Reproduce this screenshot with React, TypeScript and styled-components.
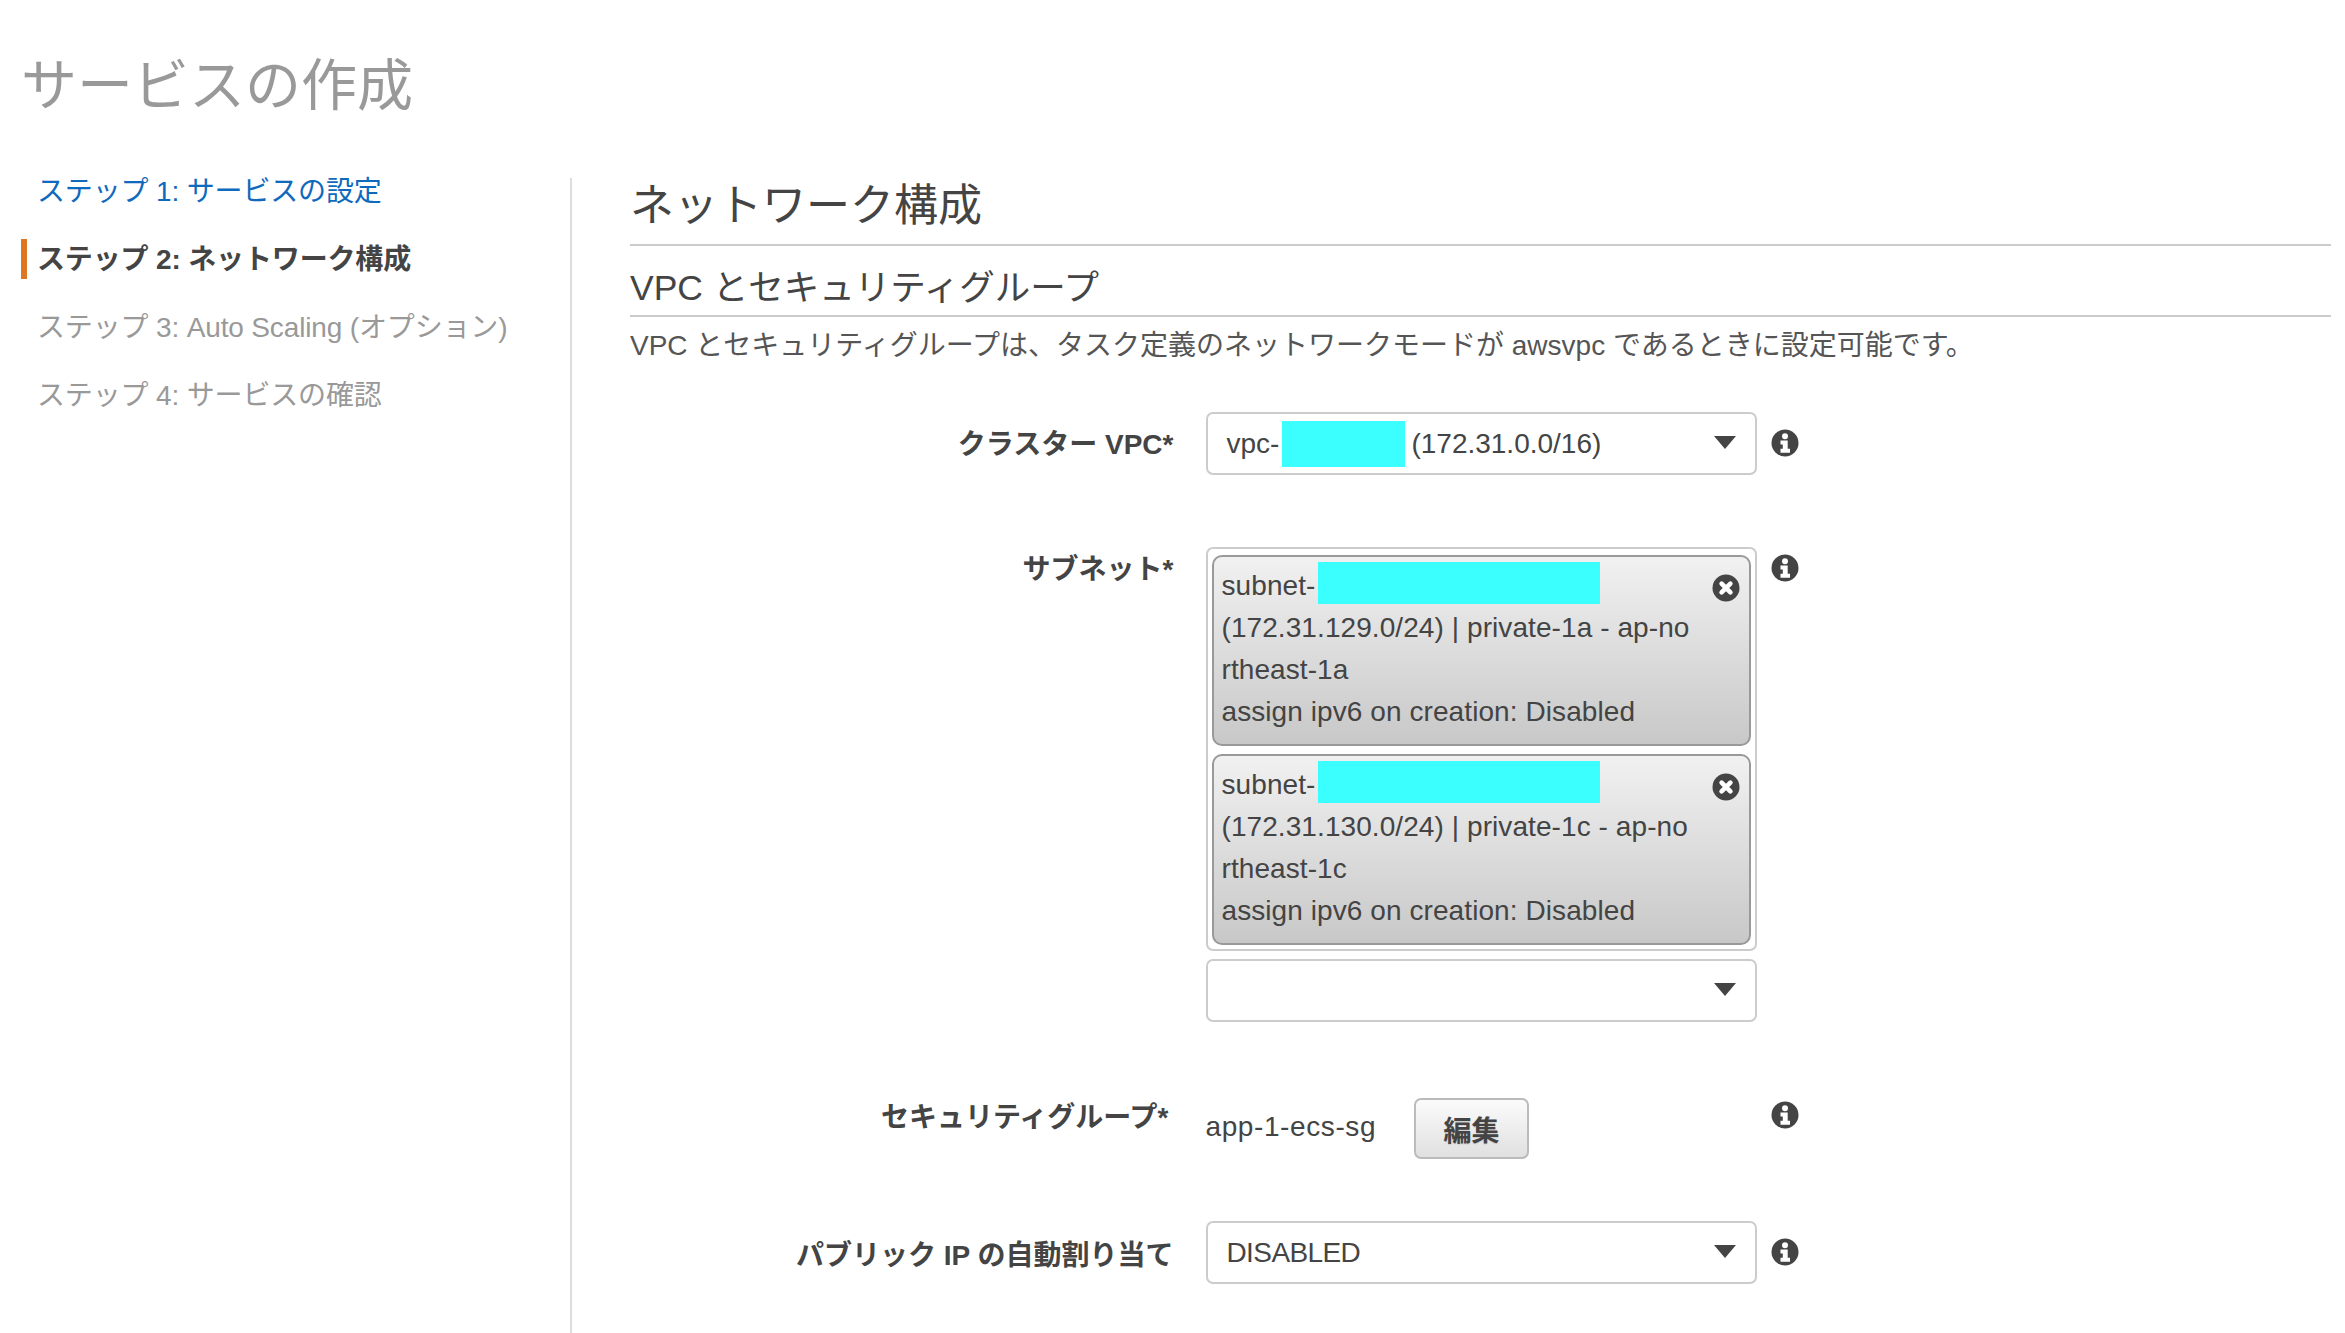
import { createGlobalStyle } from "styled-components";
import styled from "styled-components";

const GlobalStyle = createGlobalStyle`
  html, body {
    margin: 0;
    padding: 0;
    background: #fff;
  }
  body {
    width: 2345px;
    height: 1333px;
    overflow: hidden;
    font-family: "Liberation Sans", "Noto Sans CJK JP", sans-serif;
    font-size: 28px;
    color: #444;
  }
`;

const steps = [
  { text: "ステップ 1: サービスの設定", state: "link" },
  { text: "ステップ 2: ネットワーク構成", state: "active" },
  { text: "ステップ 3: Auto Scaling (オプション)", state: "idle" },
  { text: "ステップ 4: サービスの確認", state: "idle" },
];

const subnets = [
  { cidr: "(172.31.129.0/24) | private-1a - ap-no", rest: "rtheast-1a" },
  { cidr: "(172.31.130.0/24) | private-1c - ap-no", rest: "rtheast-1c" },
];

const InfoIcon = () => (
  <svg width="28" height="28" viewBox="0 0 28 28">
    <circle cx="14" cy="14" r="13.5" fill="#444" />
    <circle cx="14" cy="7.2" r="3" fill="#fff" />
    <path d="M9.5 11.5h7.2v8.2h2.3v4H9.5v-4h2.3v-4.2H9.5z" fill="#fff" />
  </svg>
);

const CloseIcon = () => (
  <svg width="28" height="28" viewBox="0 0 28 28">
    <circle cx="14" cy="14" r="13.5" fill="#444" />
    <path d="M9.6 9.6l8.8 8.8M18.4 9.6l-8.8 8.8" stroke="#fff" strokeWidth="4.6" strokeLinecap="round" />
  </svg>
);

export default function App() {
  return (
    <Page>
      <GlobalStyle />
      <PageTitle>サービスの作成</PageTitle>
      <Layout>
        <StepNav>
          {steps.map((s) => (
            <StepItem key={s.text} $state={s.state}>
              {s.text}
            </StepItem>
          ))}
        </StepNav>
        <Main>
          <SectionTitle>ネットワーク構成</SectionTitle>
          <SubTitle>VPC とセキュリティグループ</SubTitle>
          <Description>
            VPC とセキュリティグループは、タスク定義のネットワークモードが awsvpc であるときに設定可能です。
          </Description>

          <FormRow $offset={11} $mt={46}>
            <FieldLabel>クラスター VPC*</FieldLabel>
            <SelectBox>
              <SelectValue>
                vpc-
                <Gap $width={3} />
                <Redacted $width={123} $height={46} />
                <Gap $width={6} />
                (172.31.0.0/16)
              </SelectValue>
              <Caret />
            </SelectBox>
            <InfoSlot>
              <InfoIcon />
            </InfoSlot>
          </FormRow>

          <FormRow $offset={1} $mt={72}>
            <FieldLabel>サブネット*</FieldLabel>
            <div>
              <TagList>
                {subnets.map((s) => (
                  <Tag key={s.cidr}>
                    <TagClose>
                      <CloseIcon />
                    </TagClose>
                    <TagLine>
                      subnet-
                      <Gap $width={3} />
                      <Redacted $width={282} $height={42} $mt={-3} />
                    </TagLine>
                    <TagLine>{s.cidr}</TagLine>
                    <TagLine>{s.rest}</TagLine>
                    <TagLine>assign ipv6 on creation: Disabled</TagLine>
                  </Tag>
                ))}
              </TagList>
              <SelectBox $mt={8}>
                <SelectValue />
                <Caret />
              </SelectBox>
            </div>
            <InfoSlot>
              <InfoIcon />
            </InfoSlot>
          </FormRow>

          <FormRow $offset={0} $mt={73}>
            <FieldLabel $shift={-5} $top={3}>
              セキュリティグループ*
            </FieldLabel>
            <InlineField>
              <PlainValue>app-1-ecs-sg</PlainValue>
              <EditButton>編集</EditButton>
            </InlineField>
            <InfoSlot>
              <InfoIcon />
            </InfoSlot>
          </FormRow>

          <FormRow $offset={11} $mt={62}>
            <FieldLabel $top={4}>パブリック IP の自動割り当て</FieldLabel>
            <SelectBox>
              <SelectValue $tight>DISABLED</SelectValue>
              <Caret />
            </SelectBox>
            <InfoSlot>
              <InfoIcon />
            </InfoSlot>
          </FormRow>
        </Main>
      </Layout>
    </Page>
  );
}

const Page = styled.div`
  width: 2345px;
  height: 1333px;
  overflow: hidden;
  display: flex;
  flex-direction: column;
`;

const PageTitle = styled.h1`
  margin: 0;
  padding: 52px 0 0 21px;
  height: 121px;
  box-sizing: border-box;
  font-size: 56px;
  line-height: 68px;
  font-weight: 400;
  color: #999;
  flex: none;
`;

const Layout = styled.div`
  flex: 1;
  display: flex;
  align-items: stretch;
  min-height: 0;
  padding-top: 50px;
`;

const StepNav = styled.nav`
  width: 549px;
  margin-left: 21px;
  flex: none;
  display: flex;
  flex-direction: column;
  gap: 28px;
`;

const stepColors: Record<string, string> = {
  link: "#0f69bd",
  active: "#444",
  idle: "#999",
};

const StepItem = styled.div<{ $state: string }>`
  height: 40px;
  line-height: 42px;
  padding-left: 10px;
  border-left: 6px solid ${(p) => (p.$state === "active" ? "#dd7522" : "transparent")};
  color: ${(p) => stepColors[p.$state]};
  font-weight: ${(p) => (p.$state === "active" ? 700 : 400)};
  letter-spacing: -0.15px;
  white-space: nowrap;
`;

const Main = styled.main`
  flex: 1;
  margin-top: 7px;
  padding: 0 14px 0 58px;
  border-left: 2px solid #ddd;
  min-width: 0;
`;

const SectionTitle = styled.h2`
  margin: 0;
  height: 68px;
  box-sizing: border-box;
  padding: 1px 0 11px;
  font-size: 44px;
  line-height: 54px;
  font-weight: 400;
  border-bottom: 2px solid #ccc;
`;

const SubTitle = styled.h3`
  margin: 20px 0 0;
  padding-bottom: 5px;
  font-size: 35.5px;
  line-height: 44px;
  font-weight: 400;
  border-bottom: 2px solid #ccc;
`;

const Description = styled.p`
  margin: 9px 0 0;
  line-height: 40px;
  color: #555;
  white-space: nowrap;
`;

const FormRow = styled.div<{ $offset: number; $mt: number }>`
  margin-top: ${(p) => p.$mt}px;
  display: grid;
  grid-template-columns: 543.5px 551px 28px;
  column-gap: 32px;
  align-items: start;
  & > :first-child,
  & > :last-child {
    margin-top: ${(p) => p.$offset}px;
  }
  & > :last-child {
    margin-left: -18px;
  }
`;

const FieldLabel = styled.label<{ $shift?: number; $top?: number }>`
  display: block;
  text-align: right;
  line-height: 40px;
  font-weight: 700;
  white-space: nowrap;
  padding-top: ${(p) => p.$top ?? 2}px;
  padding-right: ${(p) => -(p.$shift ?? 0)}px;
`;

const InfoSlot = styled.span`
  height: 40px;
  display: flex;
  align-items: center;
`;

const SelectBox = styled.div<{ $mt?: number }>`
  height: 63px;
  margin-top: ${(p) => p.$mt ?? 0}px;
  box-sizing: border-box;
  border: 2px solid #ccc;
  border-radius: 7px;
  background: #fff;
  padding: 0 19px;
  display: flex;
  align-items: center;
  justify-content: space-between;
`;

const SelectValue = styled.div<{ $tight?: boolean }>`
  display: flex;
  align-items: center;
  white-space: nowrap;
  letter-spacing: ${(p) => (p.$tight ? "-0.6px" : "normal")};
`;

const Redacted = styled.span<{ $width: number; $height: number; $mt?: number }>`
  display: inline-block;
  width: ${(p) => p.$width}px;
  height: ${(p) => p.$height}px;
  margin-top: ${(p) => p.$mt ?? 0}px;
  background: #3bffff;
`;

const Gap = styled.span<{ $width: number }>`
  width: ${(p) => p.$width}px;
`;

const Caret = styled.span`
  width: 0;
  height: 0;
  border-left: 11px solid transparent;
  border-right: 11px solid transparent;
  border-top: 13px solid #444;
  margin-top: -2px;
`;

const TagList = styled.div`
  box-sizing: border-box;
  border: 2px solid #ccc;
  border-radius: 7px;
  padding: 6px 4px 4px;
  display: flex;
  flex-direction: column;
  gap: 8px;
`;

const Tag = styled.div`
  position: relative;
  box-sizing: border-box;
  height: 191px;
  padding: 8px 8px 0;
  border: 2px solid #999;
  border-radius: 10px;
  background: linear-gradient(#f1f1f1, #c8c8c8);
`;

const TagClose = styled.span`
  position: absolute;
  top: 17px;
  right: 9px;
  display: flex;
`;

const TagLine = styled.div`
  height: 42px;
  line-height: 42px;
  display: flex;
  letter-spacing: 0.08px;
  white-space: nowrap;
`;

const InlineField = styled.div`
  display: flex;
  align-items: center;
  gap: 38px;
  margin-top: 3px;
`;

const PlainValue = styled.span`
  letter-spacing: 0.6px;
  white-space: nowrap;
  margin-top: -3px;
`;

const EditButton = styled.button`
  width: 115px;
  height: 61px;
  box-sizing: border-box;
  padding: 0;
  border: 2px solid #bbb;
  border-radius: 7px;
  background: linear-gradient(#fbfbfb, #e0e0e0);
  font: inherit;
  font-weight: 700;
  color: #444;
  text-shadow: 0 1px 1px #ccc;
`;
